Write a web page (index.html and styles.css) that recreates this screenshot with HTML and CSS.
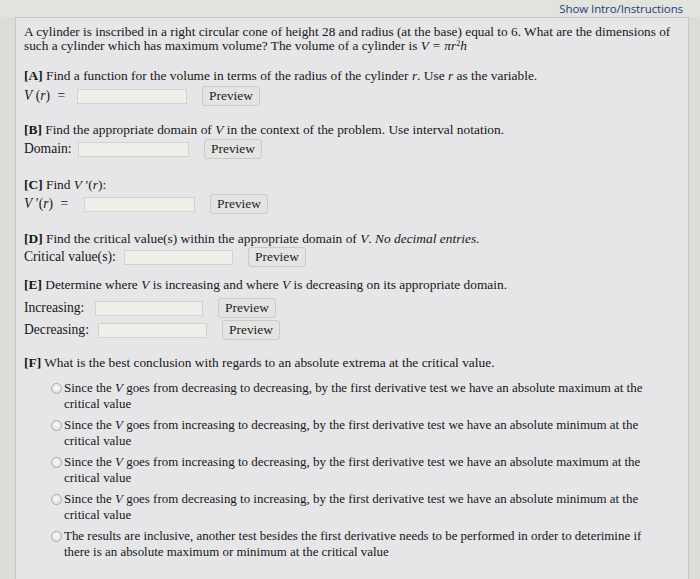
FILE: index.html
```html
<!DOCTYPE html>
<html>
<head>
<meta charset="utf-8">
<link rel="stylesheet" href="styles.css">
</head>
<body>
<div class="page">
  <div class="topbar"><a class="intro" href="#">Show Intro/Instructions</a></div>
  <div class="panel">
    <p class="problem">A cylinder is inscribed in a right circular cone of height 28 and radius (at the base) equal to 6. What are the dimensions of<br>such a cylinder which has maximum volume? The volume of a cylinder is <span class="m">V</span><span class="eq">=</span><span class="m">πr</span><sup>2</sup><span class="m">h</span></p>

    <p class="q qa"><b>[A]</b> Find a function for the volume in terms of the radius of the cylinder <span class="m">r</span>. Use <span class="m">r</span> as the variable.</p>
    <div class="row r1"><span class="lbl l1"><span class="m">V</span> (<span class="m">r</span>) <span class="eq">=</span></span><span class="inp w1"></span><span class="btn">Preview</span></div>

    <p class="q qb"><b>[B]</b> Find the appropriate domain of <span class="m">V</span> in the context of the problem. Use interval notation.</p>
    <div class="row r2"><span class="lbl l2">Domain:</span><span class="inp w2"></span><span class="btn">Preview</span></div>

    <p class="q qc"><b>[C]</b> Find <span class="m">V</span> ′(<span class="m">r</span>):</p>
    <div class="row r2"><span class="lbl l3"><span class="m">V</span> ′(<span class="m">r</span>) <span class="eq">=</span></span><span class="inp w3"></span><span class="btn">Preview</span></div>

    <p class="q qd"><b>[D]</b> Find the critical value(s) within the appropriate domain of <span class="m">V</span>. <i>No decimal entries.</i></p>
    <div class="row r3"><span class="lbl l4">Critical value(s):</span><span class="inp w4"></span><span class="btn">Preview</span></div>

    <p class="q qe"><b>[E]</b> Determine where <span class="m">V</span> is increasing and where <span class="m">V</span> is decreasing on its appropriate domain.</p>
    <div class="row r4"><span class="lbl l5">Increasing:</span><span class="inp w5"></span><span class="btn">Preview</span></div>
    <div class="row r2"><span class="lbl l6">Decreasing:</span><span class="inp w6"></span><span class="btn">Preview</span></div>

    <p class="q qf"><b>[F]</b> What is the best conclusion with regards to an absolute extrema at the critical value.</p>
    <div class="opts">
      <label class="opt"><span class="radio"></span><span class="otext">Since the <span class="m">V</span> goes from decreasing to decreasing, by the first derivative test we have an absolute maximum at the<br>critical value</span></label>
      <label class="opt"><span class="radio"></span><span class="otext">Since the <span class="m">V</span> goes from increasing to decreasing, by the first derivative test we have an absolute minimum at the<br>critical value</span></label>
      <label class="opt"><span class="radio"></span><span class="otext">Since the <span class="m">V</span> goes from increasing to decreasing, by the first derivative test we have an absolute maximum at the<br>critical value</span></label>
      <label class="opt"><span class="radio"></span><span class="otext">Since the <span class="m">V</span> goes from decreasing to increasing, by the first derivative test we have an absolute minimum at the<br>critical value</span></label>
      <label class="opt"><span class="radio"></span><span class="otext">The results are inclusive, another test besides the first derivative needs to be performed in order to deterimine if<br>there is an absolute maximum or minimum at the critical value</span></label>
    </div>
  </div>
</div>
</body>
</html>
```

FILE: styles.css
```css
html, body {
  margin: 0;
  padding: 0;
}
body {
  background: #dedcd6;
  font-family: "Liberation Serif", "Times New Roman", serif;
  color: #161616;
  width: 700px;
  height: 579px;
  overflow: hidden;
}
.page {
  padding-left: 15px;
}
.topbar {
  height: 17px;
  display: flex;
  justify-content: flex-end;
  align-items: center;
  padding-right: 17px;
  background: #e3e2de;
  margin-left: -15px;
}
.intro {
  font-family: "Open Sans", "DejaVu Sans", sans-serif;
  font-size: 11.5px;
  color: #22407a;
  text-decoration: none;
  letter-spacing: -0.1px;
}
.panel {
  width: 664px;
  height: 560px;
  background: #e6e6e8;
  border: 1px solid #c6c6c6;
  border-bottom: none;
  padding: 7px 0 0 8px;
  box-sizing: content-box;
}
p {
  margin: 0;
}
.problem {
  font-size: 13.3px;
  line-height: 14px;
}
.problem sup {
  font-size: 8px;
  line-height: 0;
  vertical-align: 4px;
}
.eq {
  margin: 0 4px;
}
.m {
  font-style: italic;
}
.q {
  font-size: 13.4px;
  line-height: 15px;
}
.qa { margin-top: 15px; }
.qb { margin-top: 16px; }
.qc { margin-top: 18px; }
.qd { margin-top: 17px; }
.qe { margin-top: 10px; }
.qf { margin-top: 15px; }
.row {
  display: flex;
  align-items: center;
  height: 20px;
  font-size: 13.6px;
}
.r1 { margin-top: 3px; }
.r2 { margin-top: 2px; }
.r3 { margin-top: 1px; }
.r4 { margin-top: 6px; }
.lbl {
  flex: none;
  white-space: nowrap;
}
.l1 { width: 53px; }
.l2 { width: 54px; }
.l3 { width: 60px; }
.l4 { width: 100px; }
.l5 { width: 71px; }
.l6 { width: 74px; }
.inp {
  display: block;
  flex: none;
  height: 13px;
  background: #efeee8;
  border: 1px solid #d3d2cc;
}
.w1 { width: 108px; }
.w2 { width: 109px; }
.w3 { width: 109px; }
.w4 { width: 107px; }
.w5 { width: 106px; }
.w6 { width: 107px; }
.btn {
  display: flex;
  flex: none;
  align-items: center;
  justify-content: center;
  width: 56px;
  height: 18px;
  margin-left: 15px;
  background: #e4e4e3;
  border: 1px solid #c9c9c7;
  border-radius: 3px;
  font-size: 13.4px;
  color: #222;
}
.opts {
  margin-top: 10px;
  margin-left: 27px;
  display: flex;
  flex-direction: column;
  gap: 5px;
}
.opt {
  display: flex;
  align-items: flex-start;
  font-size: 12.95px;
  line-height: 16px;
}
.radio {
  flex: none;
  width: 9px;
  height: 9px;
  margin-top: 3px;
  margin-right: 2px;
  border-radius: 50%;
  border: 1px solid #a9a9a9;
  background: radial-gradient(circle at 50% 40%, #fafafa 0, #e4e4e4 70%);
}
.otext {
  display: block;
}
```
